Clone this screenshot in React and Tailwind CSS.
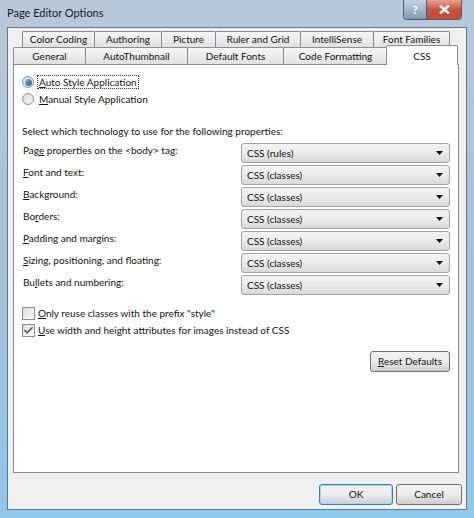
import { Check } from "lucide-react";

const font = { fontFamily: "Lato, 'Liberation Sans', sans-serif" };

const row1 = [
  ["Color Coding", 73],
  ["Authoring", 68],
  ["Picture", 55],
  ["Ruler and Grid", 86],
  ["IntelliSense", 74],
  ["Font Families", 77],
];

const row2 = [
  ["General", 73],
  ["AutoThumbnail", 103],
  ["Default Fonts", 97],
  ["Code Formatting", 105],
];

const rows = [
  [<>Pag<u>e</u> properties on the &lt;body&gt; tag:</>, "CSS (rules)"],
  [<><u>F</u>ont and text:</>, "CSS (classes)"],
  [<><u>B</u>ackground:</>, "CSS (classes)"],
  [<>Bo<u>r</u>ders:</>, "CSS (classes)"],
  [<><u>P</u>adding and margins:</>, "CSS (classes)"],
  [<><u>S</u>izing, positioning, and floating:</>, "CSS (classes)"],
  [<>Bu<u>l</u>lets and numbering:</>, "CSS (classes)"],
];

// Tab de ô trên
const Tab = ({ label, w }) => (
  <div
    className="h-full flex items-center justify-center border border-b-0 border-[#898c95] -ml-px first:ml-0 rounded-t-[2px] bg-gradient-to-b from-[#f7f7f7] to-[#e1e1e1] text-[10px] text-[#111]"
    style={{ width: w }}
  >
    {label}
  </div>
);

const Combo = ({ value }) => (
  <div className="w-[209px] h-[20px] flex items-center justify-between pl-[5px] pr-[6px] border border-[#a3a3a3] rounded-[3px] bg-gradient-to-b from-[#f3f3f3] via-[#ebebeb] to-[#d9d9d9] text-[10px] text-[#111]">
    <span>{value}</span>
    <svg width="7" height="4" viewBox="0 0 7 4">
      <path d="M0 0h7L3.5 4z" fill="#111" />
    </svg>
  </div>
);

const Radio = ({ checked }) => (
  <div className="w-[12px] h-[12px] rounded-full border border-[#8e8f8f] bg-gradient-to-br from-[#dcdcdc] to-[#f7f7f7] flex items-center justify-center">
    {checked && (
      <div className="w-[7px] h-[7px] rounded-full bg-gradient-to-br from-[#7ab6e2] to-[#1b5a8c]" />
    )}
  </div>
);

const CheckBox = ({ checked }) => (
  <div className="w-[13px] h-[13px] border border-[#8e8f8f] bg-gradient-to-br from-[#dcdcdc] to-[#fafafa] flex items-center justify-center">
    {checked && <Check size={11} strokeWidth={3} color="#3a4a7a" />}
  </div>
);

const Button = ({ children, w, focus }) => (
  <div
    className={`h-[21px] flex items-center justify-center rounded-[3px] border text-[10px] text-[#111] bg-gradient-to-b from-[#f2f2f2] via-[#ebebeb] to-[#cfcfcf] ${
      focus ? "border-[#3c7fb1] shadow-[inset_0_0_0_1px_#9fd8f5]" : "border-[#707070]"
    }`}
    style={{ width: w }}
  >
    {children}
  </div>
);

export default function App() {
  return (
    <div
      className="w-[474px] h-[518px] flex flex-col px-[7px] pb-[8px] bg-gradient-to-b from-[#b9c9da] via-[#a9c0d6] to-[#8ec8ea]"
      style={font}
    >
      {/* Title bar */}
      <div className="h-[28px] flex justify-between">
        <div className="pt-[5px] text-[11px] text-[#1a1a1a]">Page Editor Options</div>
        <div className="flex h-[20px] mr-[5px] rounded-b-[4px] overflow-hidden border border-t-0 border-[#4d5f75]">
          <div className="w-[23px] flex items-center justify-center bg-gradient-to-b from-[#c6d3e1] to-[#8499b1] text-white text-[12px] font-bold border-r border-[#4d5f75]">
            ?
          </div>
          <div className="w-[34px] flex items-center justify-center bg-gradient-to-b from-[#e7a495] via-[#c9523d] to-[#c8472f]">
            <svg width="11" height="9" viewBox="0 0 11 9">
              <path d="M1 0.5L10 8.5M10 0.5L1 8.5" stroke="#fff" strokeWidth="2.4" />
            </svg>
          </div>
        </div>
      </div>

      {/* Client area */}
      <div className="flex-1 flex flex-col bg-[#f0f0f0] border border-[#62768e] pt-[3px] px-[5px] pb-[4px]">
        {/* Tabs */}
        <div className="flex h-[16px] ml-[9px]">
          {row1.map(([l, w]) => (
            <Tab key={l} label={l} w={w} />
          ))}
        </div>
        <div className="flex h-[17px] items-end">
          {row2.map(([l, w]) => (
            <Tab key={l} label={l} w={w} />
          ))}
          <div className="w-[72px] h-[20px] -mb-px -ml-[2px] z-10 flex items-start pt-[3px] justify-center border border-b-0 border-[#898c95] rounded-t-[2px] bg-white text-[10px] text-[#111]">
            CSS
          </div>
        </div>

        {/* Panel */}
        <div className="h-[409px] mr-[2px] bg-white border border-[#898c95] pl-[8px] pr-[8px] flex flex-col text-[10px] text-[#111]">
          <div className="flex flex-col gap-[3px] pt-[10px]">
            <div className="h-[14px] flex items-center gap-[3px]">
              <Radio checked />
              <span className="border border-dotted border-[#333] px-px leading-[12px]">
                <u>A</u>uto Style Application
              </span>
            </div>
            <div className="h-[14px] flex items-center gap-[4px]">
              <Radio />
              <span className="px-px leading-[12px]">
                <u>M</u>anual Style Application
              </span>
            </div>
          </div>

          <div className="mt-[18px] h-[14px] leading-[14px]">
            Select which technology to use for the following properties:
          </div>

          <div className="flex flex-col gap-[2px] mt-[5px]">
            {rows.map(([label, value], i) => (
              <div key={i} className="flex items-start justify-between">
                <span className="pl-px leading-[14px]">{label}</span>
                <Combo value={value} />
              </div>
            ))}
          </div>

          <div className="flex flex-col gap-[3px] mt-[11px]">
            <div className="h-[14px] flex items-center gap-[3px]">
              <CheckBox />
              <span>
                <u>O</u>nly reuse classes with the prefix "style"
              </span>
            </div>
            <div className="h-[14px] flex items-center gap-[3px]">
              <CheckBox checked />
              <span>
                <u>U</u>se width and height attributes for images instead of CSS
              </span>
            </div>
          </div>

          <div className="flex justify-end mt-[14px]">
            <Button w={80}>
              <span>
                <u>R</u>eset Defaults
              </span>
            </Button>
          </div>
        </div>

        {/* Bottom buttons */}
        <div className="flex justify-end gap-[3px] mt-[11px] mr-[-1px]">
          <Button w={74} focus>
            OK
          </Button>
          <Button w={66}>Cancel</Button>
        </div>
      </div>
    </div>
  );
}
